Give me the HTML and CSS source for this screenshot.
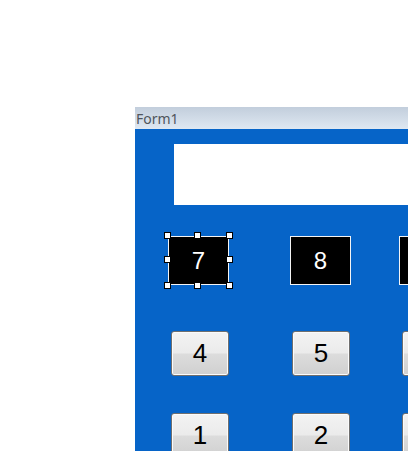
FILE: index.html
```html
<!DOCTYPE html>
<html>
<head>
<meta charset="utf-8">
<link rel="stylesheet" href="styles.css">
</head>
<body>
<div class="window">
  <div class="titlebar"><span class="title">Form1</span></div>
  <div class="client">
    <div class="display"></div>
    <div class="row row-dark">
      <div class="cell"><div class="key dark selected">7
        <span class="h h-tl"></span><span class="h h-tc"></span><span class="h h-tr"></span>
        <span class="h h-ml"></span><span class="h h-mr"></span>
        <span class="h h-bl"></span><span class="h h-bc"></span><span class="h h-br"></span>
      </div></div>
      <div class="cell"><div class="key dark">8</div></div>
      <div class="cell"><div class="key dark">9</div></div>
    </div>
    <div class="row row-light">
      <div class="cell"><div class="key light">4</div></div>
      <div class="cell"><div class="key light">5</div></div>
      <div class="cell"><div class="key light">6</div></div>
    </div>
    <div class="row row-light row-last">
      <div class="cell"><div class="key light">1</div></div>
      <div class="cell"><div class="key light">2</div></div>
      <div class="cell"><div class="key light">3</div></div>
    </div>
  </div>
</div>
</body>
</html>
```
FILE: styles.css
```css
html, body {
  margin: 0;
  padding: 0;
  background: #ffffff;
  overflow: hidden;
  width: 408px;
  height: 451px;
}
.window {
  margin: 107px 0 0 135px;
  width: 340px;
}
.titlebar {
  height: 22px;
  background: linear-gradient(#c2cedc, #dfe8f2);
  display: flex;
  align-items: center;
}
.title {
  font-family: "Noto Sans", "DejaVu Sans", sans-serif;
  font-size: 14px;
  line-height: 14px;
  color: #50555c;
  padding-left: 1px;
  padding-top: 2px;
}
.client {
  background: #0664c8;
  padding: 15px 0 0 0;
  height: 330px;
}
.display {
  margin-left: 39px;
  height: 61px;
  background: #ffffff;
}
.row {
  display: grid;
  grid-template-columns: 122px 109px 109px;
  padding-left: 33px;
}
.row-dark {
  margin-top: 31px;
}
.row-light {
  margin-top: 46px;
  padding-left: 36px;
  grid-template-columns: 121px 110px 110px;
}
.row-last {
  margin-top: 37px;
}
.key {
  position: relative;
  display: flex;
  align-items: center;
  justify-content: center;
  font-family: "Liberation Sans", Arial, sans-serif;
  box-sizing: border-box;
}
.dark {
  width: 61px;
  height: 49px;
  background: #000000;
  border: 1px solid #f4f4f4;
  color: #ffffff;
  font-size: 24px;
}
.light {
  width: 58px;
  height: 45px;
  border: 1px solid #6f6f6f;
  border-radius: 3px;
  background: linear-gradient(#f3f3f3 0%, #ebebeb 48%, #dcdcdc 52%, #d0d0d0 100%);
  box-shadow: inset 0 0 0 1px #fbfbfb;
  color: #000000;
  font-size: 26px;
}
.h {
  position: absolute;
  width: 5px;
  height: 5px;
  background: #ffffff;
  border: 1.5px solid #000000;
}
.h-tl { left: -5px; top: -5px; }
.h-tc { left: 25px; top: -5px; }
.h-tr { right: -5px; top: -5px; }
.h-ml { left: -5px; top: 19px; }
.h-mr { right: -5px; top: 19px; }
.h-bl { left: -5px; bottom: -5px; }
.h-bc { left: 25px; bottom: -5px; }
.h-br { right: -5px; bottom: -5px; }
```
